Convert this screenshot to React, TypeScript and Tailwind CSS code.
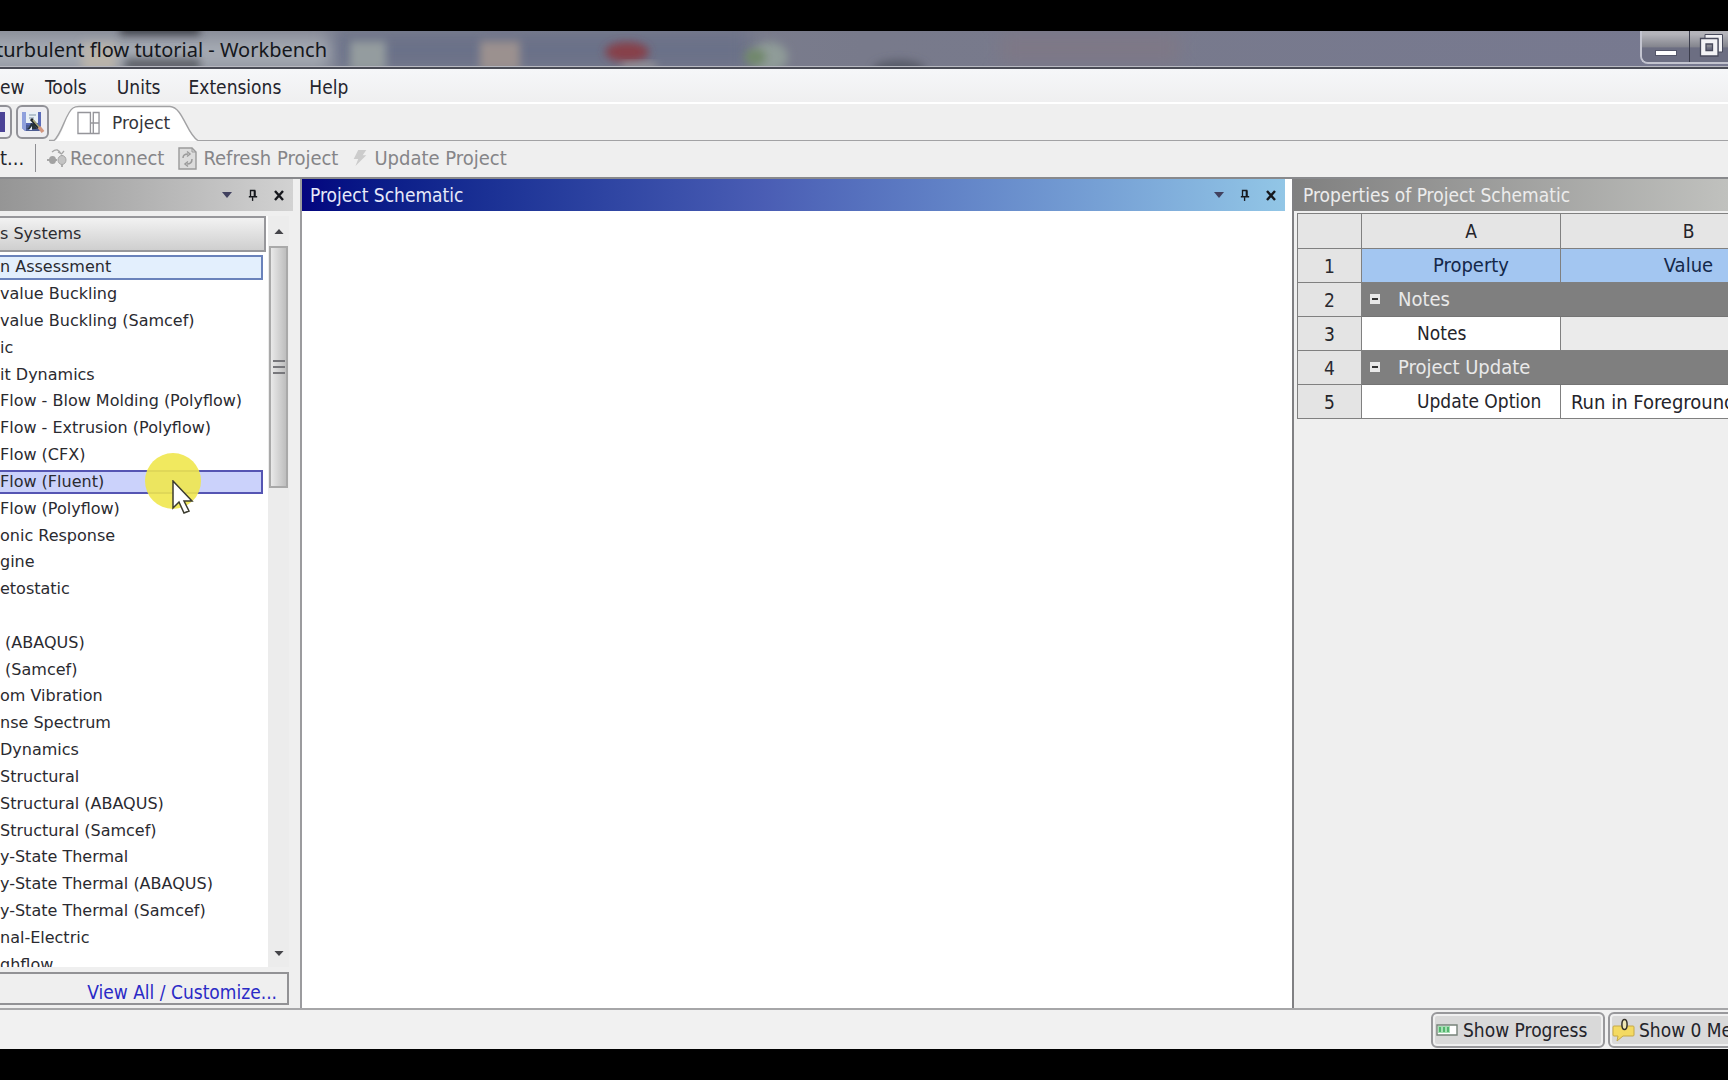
import React from 'react';

const systems = [
  'n Assessment',
  'value Buckling',
  'value Buckling (Samcef)',
  'ic',
  'it Dynamics',
  'Flow - Blow Molding (Polyflow)',
  'Flow - Extrusion (Polyflow)',
  'Flow (CFX)',
  'Flow (Fluent)',
  'Flow (Polyflow)',
  'onic Response',
  'gine',
  'etostatic',
  '',
  ' (ABAQUS)',
  ' (Samcef)',
  'om Vibration',
  'nse Spectrum',
  'Dynamics',
  'Structural',
  'Structural (ABAQUS)',
  'Structural (Samcef)',
  'y-State Thermal',
  'y-State Thermal (ABAQUS)',
  'y-State Thermal (Samcef)',
  'nal-Electric',
  'ghflow',
];

function PanelButtons() {
  return (
    <div className="flex items-center gap-3 text-[#16181d]">
      <button aria-label="Panel menu" className="flex w-[14px] justify-center">
        <svg width="10" height="6" viewBox="0 0 10 6">
          <path d="M0 0h10L5 6z" fill="#41415f" />
        </svg>
      </button>
      <button aria-label="Pin panel" className="flex w-[14px] justify-center">
        <svg width="10" height="13" viewBox="0 0 12 14" fill="none" stroke="currentColor">
          <path d="M3 8V1h5v7" strokeWidth="1.6" />
          <path d="M8 1v7" strokeWidth="2.4" />
          <path d="M1 8.5h10" strokeWidth="1.8" />
          <path d="M5.5 9v4.5" strokeWidth="1.6" />
        </svg>
      </button>
      <button aria-label="Close panel" className="flex w-[14px] justify-center">
        <svg width="10" height="11" viewBox="0 0 10 11" fill="none" stroke="currentColor" strokeWidth="2.4">
          <path d="M1 1l8 9M9 1l-8 9" />
        </svg>
      </button>
    </div>
  );
}

function TitleBar() {
  return (
    <header className="relative flex h-[38px] shrink-0 items-start justify-between overflow-hidden border-b-2 border-[#4a4c56] bg-linear-to-r from-[#858994] via-[#787a8b] to-[#777990]">
      <svg className="absolute inset-0 h-full w-full" aria-hidden="true">
        <defs>
          <filter id="soft" x="-30%" y="-60%" width="160%" height="220%">
            <feGaussianBlur stdDeviation="4" />
          </filter>
          <filter id="glow" x="-10%" y="-60%" width="120%" height="220%">
            <feGaussianBlur stdDeviation="9" />
          </filter>
        </defs>
        <rect x="330" y="0" width="420" height="38" fill="#6b7188" filter="url(#glow)" />
        <rect x="-20" y="6" width="350" height="32" fill="#a5aab3" filter="url(#glow)" />
        <rect x="120" y="-8" width="80" height="12" fill="#3f434b" filter="url(#soft)" />
        <rect x="125" y="28" width="75" height="12" fill="#5b5f66" filter="url(#soft)" />
        <rect x="82" y="12" width="34" height="28" fill="#b9b4ab" filter="url(#soft)" />
        <rect x="350" y="10" width="36" height="30" fill="#949c9f" filter="url(#soft)" />
        <rect x="480" y="10" width="40" height="30" fill="#9b918f" filter="url(#soft)" />
        <ellipse cx="627" cy="21" rx="22" ry="10" fill="#87404a" filter="url(#soft)" />
        <rect x="622" y="32" width="34" height="6" fill="#a19d9f" filter="url(#soft)" />
        <ellipse cx="770" cy="26" rx="18" ry="15" fill="#8f9b98" filter="url(#soft)" />
        <ellipse cx="755" cy="26" rx="11" ry="8" fill="#70876a" filter="url(#soft)" />
        <ellipse cx="899" cy="38" rx="26" ry="9" fill="#595c69" filter="url(#soft)" />
        <rect x="1000" y="2" width="180" height="30" fill="#7e7886" filter="url(#glow)" />
      </svg>
      <h1 className="relative -ml-1 whitespace-nowrap pt-[5px] font-['Noto_Sans'] text-[20px] leading-7 text-[#15171c]">turbulent flow tutorial - Workbench</h1>
      <div className="relative flex h-[33px] overflow-hidden rounded-bl-lg border-b-2 border-l-2 border-[#c3c4cf]">
        <button aria-label="Minimize" className="flex w-12 items-center justify-center border-r border-[#3b3d4c] bg-linear-to-b from-[#b4b4ba] from-10% via-[#85868f] via-50% to-[#6c6e82] to-55% pt-3">
          <span className="h-[6px] w-[22px] border border-[#55576a] bg-white" />
        </button>
        <button aria-label="Restore" className="flex w-[38px] items-start justify-start bg-linear-to-b from-[#b4b4ba] from-10% via-[#85868f] via-50% to-[#6c6e82] to-55% pl-[9px] pt-px">
          <svg width="26" height="26" viewBox="0 0 26 26">
            <path d="M6 2.5h17.5V20H19V7H6z" fill="#f2f2f5" stroke="#484a5c" />
            <path fillRule="evenodd" d="M1.500 6.500h17.500v17.500h-17.500zM7 12v6.500h6.500V12z" fill="#f2f2f5" stroke="#484a5c" strokeWidth="1.300" />
          </svg>
        </button>
      </div>
      <span className="absolute inset-x-0 bottom-0 h-px bg-[#b9bac2]" />
    </header>
  );
}

function MenuBar() {
  return (
    <nav className="flex h-[35px] shrink-0 items-center border-b-2 border-white bg-linear-to-b from-[#f6f7f9] to-[#efeff0] pt-1 text-[19px] text-[#24242c]">
      <button className="w-[17px] text-left">ew</button>
      <button className="ml-7">Tools</button>
      <button className="ml-[30px]">Units</button>
      <button className="ml-7">Extensions</button>
      <button className="ml-7">Help</button>
    </nav>
  );
}

function TabStrip() {
  return (
    <div className="flex h-[37px] shrink-0 items-end">
      <div className="flex h-full items-start gap-1 pt-px">
        <button aria-label="Save project" className="flex h-[34px] w-3 items-center rounded-r-md border-2 border-l-0 border-[#929298] bg-[#f0f0f3]">
          <span className="h-5 w-[5px] bg-[#4a4296]" />
        </button>
        <button aria-label="Save project as" className="flex h-[34px] w-[33px] items-center justify-center rounded-md border-2 border-[#929298] bg-[#eeeef2]">
          <svg width="24" height="24" viewBox="0 0 24 24">
            <path d="M1 2h19v19H4l-3-3z" fill="#5a6bb8" />
            <path d="M1 2h4v19l-4-3z" fill="#8fa0dc" />
            <path d="M5 2h12v11H5z" fill="#e9f0f5" />
            <path d="M8 5h7M8 8h5" stroke="#8095a8" />
            <path d="M5 21v-6h13v6z" fill="#4c5c92" />
            <path d="M5 19q3 0 5-6l3 1 3 5z" fill="#27333a" />
            <path d="M8 20l3-4v4z" fill="#e8edf4" />
            <path d="M10 9l8 9" stroke="#1f2528" strokeWidth="2.800" />
            <path d="M12 10l7 8" stroke="#a8a77a" strokeWidth="1.500" />
            <path d="M18 17l4 5" stroke="#d3977f" strokeWidth="3.600" />
          </svg>
        </button>
      </div>
      <div className="relative flex h-full w-[149px] items-center gap-3 pl-7">
        <svg className="absolute inset-0 h-full w-full" viewBox="0 0 149 37" preserveAspectRatio="none" aria-hidden="true">
          <path d="M6 37C15 32 17 5 26 2H122C134 3 139 31 148 37z" fill="#fff" />
          <path d="M0 36.500H5C13 30 17 8 24 4Q26 2.500 30 2.500H121C134 3 138 31 149 36.500" fill="none" stroke="#a2a2a4" strokeWidth="1.400" />
        </svg>
        <svg className="relative" width="23" height="24" viewBox="0 0 24 24" fill="#fff" stroke="#95959a" strokeWidth="1.400">
          <path d="M1 1h13v22H1zM17 1h6v22h-6zM14 12h9M14 1v22h3V1" />
        </svg>
        <button className="relative font-['DejaVu_Sans'] text-[17px] leading-6 text-[#34343a]">Project</button>
      </div>
      <div className="h-full flex-1 border-b border-[#a2a2a4]" />
    </div>
  );
}

function ToolBar() {
  return (
    <div className="flex h-[38px] shrink-0 items-center border-b-2 border-[#88898c] pb-[2px] text-[20px] leading-7 text-[#858588]">
      <button className="w-[22px] text-left text-[#24242c]">t...</button>
      <span className="ml-[13px] h-7 w-px bg-[#8e8e92]" />
      <button disabled className="ml-[10px] flex items-center gap-[2px]">
        <svg width="22" height="20" viewBox="0 0 22 20" fill="none" stroke="#a6a6a6">
          <path d="M6 4q6-5 9 2M12 4l3.500 2L18 3" strokeWidth="1.300" />
          <path d="M1 12h4M8 12h3" strokeWidth="2" />
          <ellipse cx="6.500" cy="12" rx="3.500" ry="4" fill="#a2a2a2" stroke="none" />
          <path d="M16 7v3M16 14v5" strokeWidth="1.800" />
          <ellipse cx="16" cy="12" rx="4" ry="4.500" fill="#c4c4c4" />
        </svg>
        Reconnect
      </button>
      <button disabled className="ml-[14px] flex items-center gap-[6px]">
        <svg width="19" height="23" viewBox="0 0 19 23" fill="none" stroke="#9a9a9a">
          <path d="M1 1h13l4 4v17H1z" fill="#dcdcdc" strokeWidth="1.400" />
          <path d="M14 1v4h4" />
          <path d="M5 11q0-4 5-4M9 4.500L12 7 9 9.500M14 12q0 5-5 5M10 14.500L7 17l3 2.500" strokeWidth="1.500" />
        </svg>
        Refresh Project
      </button>
      <button disabled className="ml-[14px] flex items-center gap-[6px]">
        <svg width="16" height="18" viewBox="0 0 16 20">
          <path d="M6 1h9l-4 6h4L3 19l3-8H1z" fill="#cccccc" />
        </svg>
        Update Project
      </button>
    </div>
  );
}

function Toolbox() {
  return (
    <aside className="flex w-[302px] shrink-0 border-r-2 border-[#9b9b9e]">
      <div className="flex min-w-0 flex-1 flex-col">
        <div className="mr-[7px] flex h-8 shrink-0 items-center justify-end bg-linear-to-r from-[#959595] to-[#d2d2d2] pr-[7px]">
          <PanelButtons />
        </div>
        <div className="mt-[5px] flex min-h-0 flex-1">
          <div className="flex w-[268px] flex-col bg-white">
            <button className="mr-[2px] flex h-9 shrink-0 items-center whitespace-pre border-2 border-l-0 border-[#97979b] bg-linear-to-b from-[#f2f2f2] to-[#cfcfcf] font-['DejaVu_Sans'] text-[16px] text-[#2c2c30]">s Systems</button>
            <div className="min-h-0 flex-1 overflow-hidden pt-[2px]">
              <ul className="grid h-[calc(100%+11px)] auto-rows-fr font-['DejaVu_Sans'] text-[16px] text-[#2a2a30]">
                {systems.map((name, i) => (
                  <li key={i} className="relative mr-[5px] flex py-px">
                    <button
                      className={
                        i === 0
                          ? 'flex w-full items-center whitespace-pre border-2 border-l-0 border-[#6a82bb] bg-[#e3effd] leading-5'
                          : i === 8
                            ? 'flex w-full items-center whitespace-pre border-2 border-l-0 border-[#5555b3] bg-[#cbd2fb] leading-5'
                            : 'flex w-full items-center whitespace-pre leading-5'
                      }
                      aria-label={name ? undefined : 'Modal'}
                    >
                      {name}
                    </button>
                    {i === 8 && (
                      <span className="pointer-events-none absolute left-[145px] top-[-16px] z-10">
                        <span className="block h-14 w-14 rounded-full bg-[#f0e74e] opacity-90" />
                        <svg className="absolute left-[27px] top-[27px]" width="22" height="34" viewBox="0 0 22 34">
                          <path d="M1 1v27l6-6 5 11 5-2-5-10h8z" fill="#fff" stroke="#3c3c30" strokeWidth="1.500" />
                        </svg>
                      </span>
                    )}
                  </li>
                ))}
              </ul>
            </div>
          </div>
          <div className="flex w-[21px] flex-col items-center bg-[#ececec]">
            <button aria-label="Scroll up" className="flex h-[30px] w-full shrink-0 items-center justify-center">
              <svg width="10" height="5" viewBox="0 0 11 6">
                <path d="M0 6h11L5.500 0z" fill="#45454a" />
              </svg>
            </button>
            <div className="flex h-[242px] w-[19px] flex-col items-center justify-center gap-1 border-2 border-[#a9a9a9] bg-linear-to-r from-[#e9e9e9] to-[#bebebe]">
              <span className="h-[2px] w-3 bg-[#77777b]" />
              <span className="h-[2px] w-3 bg-[#77777b]" />
              <span className="h-[2px] w-3 bg-[#77777b]" />
            </div>
            <button aria-label="Scroll down" className="mt-auto flex h-[28px] w-full shrink-0 items-center justify-center">
              <svg width="10" height="5" viewBox="0 0 11 6">
                <path d="M0 0h11L5.500 6z" fill="#45454a" />
              </svg>
            </button>
          </div>
        </div>
        <div className="mb-[3px] mr-[11px] mt-[5px] flex h-[33px] shrink-0 items-center justify-end border-2 border-l-0 border-[#929295] pr-[10px] pt-[6px]">
          <a href="#customize" className="text-[19px] leading-6 text-[#2a2ac6]">View All / Customize...</a>
        </div>
      </div>
    </aside>
  );
}

function Schematic() {
  return (
    <main className="min-w-0 flex-1 bg-white">
      <div className="mr-[7px] flex h-8 items-center justify-between bg-linear-to-r from-[#04047f] via-[#4a5db4] via-47% to-[#92c6e6] pl-2 pr-[7px]">
        <h2 className="text-[19px] text-[#e6e9fa]">Project Schematic</h2>
        <PanelButtons />
      </div>
    </main>
  );
}

function GroupRow({ num, name }: { num: number; name: string }) {
  return (
    <tr className="h-[34px] bg-[#7f7f7f] text-[#e9e9e9]">
      <th className="border border-[#808080] bg-[#e4e4e4] font-normal text-[#2a2a30]">{num}</th>
      <td colSpan={2} className="border border-[#747474] pb-px text-[20px]">
        <div className="flex items-center gap-[18px] pl-2">
          <button aria-label={'Collapse ' + name} className="flex h-[10px] w-[10px] items-center justify-center bg-[#e8e8e8]">
            <span className="h-[2px] w-[6px] bg-[#333333]" />
          </button>
          {name}
        </div>
      </td>
    </tr>
  );
}

function Properties() {
  return (
    <section className="w-[436px] shrink-0 overflow-hidden border-l-2 border-[#808083]">
      <div className="flex h-8 items-center bg-linear-to-r from-[#808080] to-[#c0c1be] pl-[9px]">
        <h2 className="whitespace-nowrap text-[19px] text-[#ececec]">Properties of Project Schematic</h2>
      </div>
      <table className="ml-[3px] mt-[2px] w-[520px] table-fixed border-collapse text-[19px] leading-6 text-[#24242a]">
        <colgroup>
          <col className="w-16" />
          <col className="w-[199px]" />
          <col />
        </colgroup>
        <tbody>
          <tr className="h-[35px] bg-[#e5e5e5]">
            <th className="border border-[#808080]" />
            <th className="border border-[#808080] pl-5 font-normal">A</th>
            <th className="border border-[#808080] font-normal">B</th>
          </tr>
          <tr className="h-[34px] bg-[#a3c6f1] text-[#14284a]">
            <th className="border border-[#808080] bg-[#e4e4e4] font-normal text-[#2a2a30]">1</th>
            <td className="border border-[#808080] pb-px pl-5 text-center text-[20px]">Property</td>
            <td className="border border-[#808080] pb-px text-center text-[20px]">Value</td>
          </tr>
          <GroupRow num={2} name="Notes" />
          <tr className="h-[34px] bg-white">
            <th className="border border-[#808080] bg-[#e4e4e4] font-normal">3</th>
            <td className="border border-[#808080] pb-[2px] pl-[55px]">Notes</td>
            <td className="border border-[#808080] bg-[#ebebeb]" />
          </tr>
          <GroupRow num={4} name="Project Update" />
          <tr className="h-[34px] bg-white">
            <th className="border border-[#808080] bg-[#e4e4e4] font-normal">5</th>
            <td className="whitespace-nowrap border border-[#808080] pb-[2px] pl-[55px]">Update Option</td>
            <td className="whitespace-nowrap border border-[#808080] pl-[10px] text-[20px]">Run in Foreground</td>
          </tr>
        </tbody>
      </table>
    </section>
  );
}

function StatusBar() {
  return (
    <footer className="flex h-[41px] shrink-0 justify-end gap-[3px] overflow-hidden border-t-2 border-[#a6a6a8] bg-[#f1f1f1] pb-px pt-[2px] text-[19px] leading-7 text-[#24242a]">
      <button className="flex w-[174px] items-center gap-[5px] whitespace-nowrap rounded-md border-2 border-[#98989b] bg-[#d9d9d9] pl-[3px] ring-2 ring-inset ring-[#f0f0f0]">
        <svg width="22" height="12" viewBox="0 0 22 12">
          <path d="M1 1h20v10H1z" fill="#fff" stroke="#77837a" strokeWidth="1.400" />
          <path d="M2 2h12v7H2z" fill="#a5dfb3" />
          <path d="M4 3v5M8 3v5M12 3v5" stroke="#4bb066" strokeWidth="1.800" />
        </svg>
        Show Progress
      </button>
      <div className="w-[120px] overflow-hidden">
        <button className="flex h-full w-[220px] items-center gap-1 whitespace-nowrap rounded-md border-2 border-[#98989b] bg-[#d9d9d9] pl-[2px] ring-2 ring-inset ring-[#f0f0f0]">
          <svg width="23" height="24" viewBox="0 0 23 24">
            <path d="M2 8h19q1 0 1 1v8q0 1-1 1H11l-6 5 1-5H2q-1 0-1-1V9q0-1 1-1z" fill="#f4da62" stroke="#c6a947" />
            <ellipse cx="12.500" cy="6.500" rx="2.600" ry="5" fill="#efe7b5" stroke="#37332a" strokeWidth="1.500" />
          </svg>
          Show 0 Messages
        </button>
      </div>
    </footer>
  );
}

export default function App() {
  return (
    <div className="flex h-screen flex-col overflow-hidden bg-black py-[31px] font-['DejaVu_Sans_Condensed','DejaVu_Sans',sans-serif]">
      <TitleBar />
      <div className="flex min-h-0 flex-1 flex-col bg-[#efefef]">
        <MenuBar />
        <TabStrip />
        <ToolBar />
        <div className="flex min-h-0 flex-1">
          <Toolbox />
          <Schematic />
          <Properties />
        </div>
        <StatusBar />
      </div>
    </div>
  );
}
